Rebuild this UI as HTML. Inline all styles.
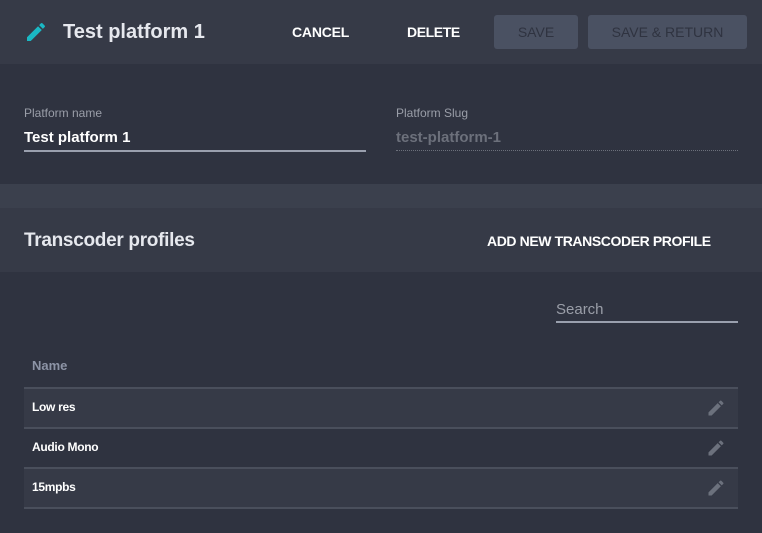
<!DOCTYPE html>
<html><head><style>
*{margin:0;padding:0;box-sizing:border-box}
body{width:762px;height:533px;background:#2f3340;font-family:"Liberation Sans",sans-serif;position:relative;overflow:hidden;color:#fff}
.a{position:absolute}
.btn{font-weight:bold;font-size:14px;letter-spacing:0}
</style></head><body>
<div class="a" style="left:0;top:0;width:762px;height:64px;background:#363a47"></div>
<svg class="a" style="left:24px;top:20px" width="24" height="24" viewBox="0 0 24 24"><path fill="#1ab8c4" d="M3 17.25V21h3.75L17.81 9.94l-3.75-3.75L3 17.25zM20.71 7.04a1 1 0 000-1.41l-2.34-2.34a1 1 0 00-1.41 0l-1.83 1.83 3.75 3.75 1.83-1.83z"/></svg>
<div class="a" style="left:63px;top:21px;font-size:20px;font-weight:bold;color:#e6e8ee">Test platform 1</div>
<div class="a btn" style="left:292px;top:24px;letter-spacing:-0.2px">CANCEL</div>
<div class="a btn" style="left:407px;top:24px;letter-spacing:-0.4px">DELETE</div>
<div class="a" style="left:494px;top:15px;width:84px;height:34px;background:#4a5162;border-radius:3px;color:#2f3340;font-size:14px;text-align:center;line-height:34px">SAVE</div>
<div class="a" style="left:588px;top:15px;width:159px;height:34px;background:#4a5162;border-radius:3px;color:#2f3340;font-size:14px;text-align:center;line-height:34px">SAVE &amp; RETURN</div>

<div class="a" style="left:24px;top:106px;font-size:12px;color:#9a9ea8">Platform name</div>
<div class="a" style="left:24px;top:129px;font-size:15px;font-weight:bold">Test platform 1</div>
<div class="a" style="left:24px;top:150px;width:342px;height:2px;background:#9aa0ae"></div>
<div class="a" style="left:396px;top:106px;font-size:12px;color:#9a9ea8">Platform Slug</div>
<div class="a" style="left:396px;top:129px;font-size:15px;font-weight:bold;color:#6c707b">test-platform-1</div>
<div class="a" style="left:396px;top:150px;width:342px;border-top:1px dotted #6c707b"></div>

<div class="a" style="left:0;top:184px;width:762px;height:24px;background:#3b404d"></div>
<div class="a" style="left:0;top:208px;width:762px;height:64px;background:#363a47"></div>
<div class="a" style="left:24px;top:230px;font-size:19px;font-weight:bold;letter-spacing:-0.3px;color:#e6e8ee">Transcoder profiles</div>
<div class="a btn" style="left:487px;top:233px;letter-spacing:-0.4px">ADD NEW TRANSCODER PROFILE</div>

<div class="a" style="left:556px;top:301px;font-size:15px;color:#9a9ea8">Search</div>
<div class="a" style="left:556px;top:321px;width:182px;height:2px;background:#9aa0ae"></div>

<div class="a" style="left:32px;top:358px;font-size:13px;font-weight:bold;color:#8d94a6">Name</div>
<div class="a" style="left:24px;top:387px;width:714px;height:2px;background:#4a4f5c"></div>
<div class="a" style="left:24px;top:389px;width:714px;height:38px;background:#363a47"></div>
<div class="a" style="left:24px;top:427px;width:714px;height:2px;background:#4a4f5c"></div>
<div class="a" style="left:24px;top:467px;width:714px;height:2px;background:#4a4f5c"></div>
<div class="a" style="left:24px;top:469px;width:714px;height:38px;background:#363a47"></div>
<div class="a" style="left:24px;top:507px;width:714px;height:2px;background:#4a4f5c"></div>
<div class="a" style="left:32px;top:400px;font-size:12px;font-weight:bold;letter-spacing:-0.3px">Low res</div>
<div class="a" style="left:32px;top:440px;font-size:12px;font-weight:bold;letter-spacing:-0.3px">Audio Mono</div>
<div class="a" style="left:32px;top:480px;font-size:12px;font-weight:bold;letter-spacing:-0.3px">15mpbs</div>
<svg class="a" style="left:706px;top:398px" width="20" height="20" viewBox="0 0 24 24"><path fill="#6c717d" d="M3 17.25V21h3.75L17.81 9.94l-3.75-3.75L3 17.25zM20.71 7.04a1 1 0 000-1.41l-2.34-2.34a1 1 0 00-1.41 0l-1.83 1.83 3.75 3.75 1.83-1.83z"/></svg>
<svg class="a" style="left:706px;top:438px" width="20" height="20" viewBox="0 0 24 24"><path fill="#6c717d" d="M3 17.25V21h3.75L17.81 9.94l-3.75-3.75L3 17.25zM20.71 7.04a1 1 0 000-1.41l-2.34-2.34a1 1 0 00-1.41 0l-1.83 1.83 3.75 3.75 1.83-1.83z"/></svg>
<svg class="a" style="left:706px;top:478px" width="20" height="20" viewBox="0 0 24 24"><path fill="#6c717d" d="M3 17.25V21h3.75L17.81 9.94l-3.75-3.75L3 17.25zM20.71 7.04a1 1 0 000-1.41l-2.34-2.34a1 1 0 00-1.41 0l-1.83 1.83 3.75 3.75 1.83-1.83z"/></svg>
</body></html>
